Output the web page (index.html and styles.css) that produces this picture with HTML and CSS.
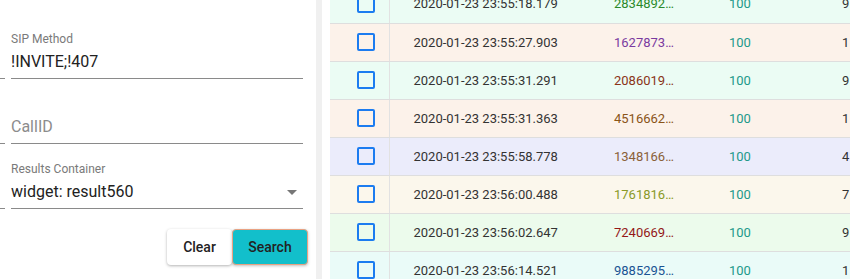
FILE: index.html
```html
<!DOCTYPE html>
<html lang="en">
<head>
    <meta charset="UTF-8">
    <title>Search results</title>
    <link rel="stylesheet" href="styles.css">
</head>
<body>
    <div class="layout">
        <div class="panel">
            <div class="fields">
                <div class="field cut"><div class="label">&nbsp;</div><div class="value">&nbsp;</div></div>
                <div class="field">
                    <div class="label">SIP Method</div>
                    <div class="value">!INVITE;!407</div>
                </div>

                <div class="field cut"><div class="label">&nbsp;</div><div class="value">&nbsp;</div></div>
                <div class="field">
                    <div class="label">&nbsp;</div>
                    <div class="value placeholder">CallID</div>
                </div>

                <div class="field cut"><div class="label">&nbsp;</div><div class="value">&nbsp;</div></div>
                <div class="field">
                    <div class="label">Results Container</div>
                    <div class="value select">widget: result560<span class="caret"></span></div>
                </div>
            </div>
            <div class="actions">
                <button class="btn btn-clear">Clear</button>
                <button class="btn btn-search">Search</button>
            </div>
        </div>

        <div class="divider"></div>

        <div class="results">
            <table class="grid">
                <tr class="r-mint"><td class="chk"><span class="box"></span></td><td class="date">2020-01-23 23:55:18.179</td><td class="id c-green">2834892…</td><td class="num">100</td><td class="last">9</td></tr>
                <tr class="r-peach"><td class="chk"><span class="box"></span></td><td class="date">2020-01-23 23:55:27.903</td><td class="id c-purple">1627873…</td><td class="num">100</td><td class="last">1</td></tr>
                <tr class="r-mint"><td class="chk"><span class="box"></span></td><td class="date">2020-01-23 23:55:31.291</td><td class="id c-rust">2086019…</td><td class="num">100</td><td class="last">9</td></tr>
                <tr class="r-peach"><td class="chk"><span class="box"></span></td><td class="date">2020-01-23 23:55:31.363</td><td class="id c-brown">4516662…</td><td class="num">100</td><td class="last">1</td></tr>
                <tr class="r-lavender"><td class="chk"><span class="box"></span></td><td class="date">2020-01-23 23:55:58.778</td><td class="id c-tan">1348166…</td><td class="num">100</td><td class="last">4</td></tr>
                <tr class="r-cream"><td class="chk"><span class="box"></span></td><td class="date">2020-01-23 23:56:00.488</td><td class="id c-olive">1761816…</td><td class="num">100</td><td class="last">7</td></tr>
                <tr class="r-green"><td class="chk"><span class="box"></span></td><td class="date">2020-01-23 23:56:02.647</td><td class="id c-red">7240669…</td><td class="num">100</td><td class="last">9</td></tr>
                <tr class="r-cyan"><td class="chk"><span class="box"></span></td><td class="date">2020-01-23 23:56:14.521</td><td class="id c-blue">9885295…</td><td class="num">100</td><td class="last">1</td></tr>
            </table>
        </div>
    </div>
</body>
</html>
```

FILE: styles.css
```css
* {
    margin: 0;
    padding: 0;
    box-sizing: border-box;
}

body {
    font-family: Roboto, 'Liberation Sans', sans-serif;
    background: #ffffff;
    color: #333333;
    overflow: hidden;
    height: 279px;
}

.layout {
    display: flex;
    height: 279px;
}

/* left search form */
.panel {
    width: 316px;
    flex: none;
    padding: 14px 8px 0 0;
}

.fields {
    display: grid;
    grid-template-columns: 5px 292px;
    column-gap: 6px;
}

.field {
    margin-top: 17px;
    border-bottom: 1px solid #8a8a8a;
    overflow: hidden;
}

.label {
    font-size: 12px;
    line-height: 16px;
    color: #7a7a7a;
    white-space: nowrap;
}

.value {
    margin-top: 3px;
    padding-bottom: 4px;
    font-size: 16px;
    line-height: 24px;
    color: #222222;
    white-space: nowrap;
}

.placeholder {
    color: #8c8c8c;
}

.select {
    display: flex;
    align-items: center;
    justify-content: space-between;
}

.caret {
    width: 0;
    height: 0;
    margin-right: 6px;
    border-left: 5px solid transparent;
    border-right: 5px solid transparent;
    border-top: 5px solid #777777;
}

.actions {
    display: flex;
    justify-content: flex-end;
    margin-top: 20px;
}

.btn {
    height: 36px;
    font-family: Roboto, 'Liberation Sans', sans-serif;
    font-size: 14px;
    font-weight: 500;
    color: #222222;
    border-radius: 4px;
    cursor: pointer;
}

.btn-clear {
    width: 65px;
    background: #ffffff;
    border: none;
    box-shadow: 0 1px 3px rgba(0, 0, 0, 0.3);
}

.btn-search {
    width: 76px;
    background: #12bfcb;
    border: 1px solid #e9a283;
    box-shadow: 0 1px 3px rgba(0, 0, 0, 0.25);
}

.divider {
    width: 6px;
    flex: none;
    background: #f0f0f0;
}

/* results table */
.results {
    flex: 1;
    padding-left: 8px;
    overflow: hidden;
}

.grid {
    border-collapse: collapse;
    margin-top: -15px;
    table-layout: fixed;
    width: 560px;
    font-size: 13px;
}

.grid td {
    height: 38px;
    border-bottom: 1px solid #dedede;
    white-space: nowrap;
    overflow: hidden;
    vertical-align: middle;
}

.chk {
    width: 59px;
    padding-left: 27px;
    border-right: 1px solid #e2e2e2;
}

.box {
    display: block;
    width: 18px;
    height: 18px;
    border: 2px solid #1c7cf0;
    border-radius: 2px;
}

.date {
    width: 201px;
    padding-left: 24px;
    color: #333333;
}

.id {
    width: 115px;
    padding-left: 24px;
}

.num {
    width: 113px;
    padding-left: 24px;
    color: #22998a;
}

.last {
    width: 72px;
    padding-left: 24px;
    color: #333333;
}

.r-mint { background: #ebfcf4; }
.r-peach { background: #fcf2ea; }
.r-lavender { background: #ebecfb; }
.r-cream { background: #fbf7ec; }
.r-green { background: #ecfbec; }
.r-cyan { background: #eafbf8; }

.c-green { color: #2a8a2a; }
.c-purple { color: #7a3aa0; }
.c-rust { color: #8a3418; }
.c-brown { color: #8a5418; }
.c-tan { color: #8a6038; }
.c-olive { color: #8a9a28; }
.c-red { color: #941818; }
.c-blue { color: #1a5494; }
```
